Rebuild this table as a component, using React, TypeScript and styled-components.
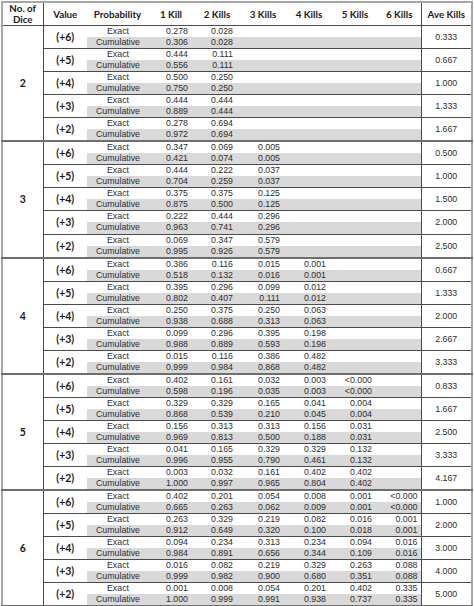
import styled, { createGlobalStyle } from "styled-components";

const GlobalStyle = createGlobalStyle`
    body {
        margin: 0;
        background: #ffffff;
    }
`

const Page = styled.div`
    padding: 1px 0 0 1px;
`

const StyledTable = styled.table`
    border-collapse: collapse;
    table-layout: fixed;
    width: 472px;
    border: 2px solid #a6a6a6;
    font-family: "Liberation Sans", Arial, sans-serif;
    font-size: 8.8px;
    color: #2e2e2e;
`

const HeadRow = styled.tr`
    height: 23px;
`

const HeadCell = styled.th<{ $line?: boolean }>`
    font-family: Lato, "Liberation Sans", sans-serif;
    font-weight: 700;
    font-size: 9.8px;
    line-height: 11px;
    color: #1a1a1a;
    text-align: center;
    vertical-align: middle;
    padding: 0;
    border-bottom: 1px solid #4a4a4a;
    border-right: ${(p) => (p.$line ? "1px solid #4a4a4a" : "none")};
`

const BodyRow = styled.tr`
    height: 11.54px;
`

const DiceCell = styled.td`
    font-family: Lato, "Liberation Sans", sans-serif;
    font-weight: 700;
    font-size: 10.5px;
    color: #1a1a1a;
    text-align: center;
    vertical-align: middle;
    padding: 0;
    border-right: 1px solid #4a4a4a;
    border-bottom: 2px solid #6e6e6e;
`

const ValueCell = styled.td<{ $end: boolean }>`
    font-family: Lato, "Liberation Sans", sans-serif;
    font-weight: 700;
    font-size: 10.5px;
    color: #1a1a1a;
    text-align: center;
    vertical-align: middle;
    padding: 0;
    border-bottom: ${(p) => (p.$end ? "2px solid #6e6e6e" : "1px solid #4a4a4a")};
`

const ProbCell = styled.td<{ $shade: boolean; $end: boolean }>`
    text-align: center;
    vertical-align: middle;
    padding: 0 0 0 1px;
    line-height: 11px;
    background: ${(p) => (p.$shade ? "#d9d9d9" : "transparent")};
    border-bottom: ${(p) =>
        !p.$shade ? "none" : p.$end ? "2px solid #6e6e6e" : "1px solid #4a4a4a"};
`

const NumCell = styled.td<{ $shade: boolean; $end: boolean; $pad: number }>`
    text-align: right;
    vertical-align: middle;
    padding: 0 ${(p) => p.$pad}px 0 0;
    line-height: 11px;
    white-space: nowrap;
    background: ${(p) => (p.$shade ? "#d9d9d9" : "transparent")};
    border-bottom: ${(p) =>
        !p.$shade ? "none" : p.$end ? "2px solid #6e6e6e" : "1px solid #4a4a4a"};
`

const AveCell = styled.td<{ $end: boolean }>`
    text-align: center;
    vertical-align: middle;
    padding: 0;
    border-left: 1px solid #4a4a4a;
    border-bottom: ${(p) => (p.$end ? "2px solid #6e6e6e" : "1px solid #4a4a4a")};
`

type Group = {
    value: string;
    exact: string[];
    cumulative: string[];
    ave: string;
};

type DiceBlock = {
    dice: string;
    groups: Group[];
};

const widths = [41, 44, 61, 46, 46, 46, 46, 46, 43, 51];
const pads = [6, 7, 6, 6, 6, 3];

const data: DiceBlock[] = [
    {
        dice: "2",
        groups: [
            { value: "(+6)", exact: ["0.278", "0.028"], cumulative: ["0.306", "0.028"], ave: "0.333" },
            { value: "(+5)", exact: ["0.444", "0.111"], cumulative: ["0.556", "0.111"], ave: "0.667" },
            { value: "(+4)", exact: ["0.500", "0.250"], cumulative: ["0.750", "0.250"], ave: "1.000" },
            { value: "(+3)", exact: ["0.444", "0.444"], cumulative: ["0.889", "0.444"], ave: "1.333" },
            { value: "(+2)", exact: ["0.278", "0.694"], cumulative: ["0.972", "0.694"], ave: "1.667" },
        ],
    },
    {
        dice: "3",
        groups: [
            { value: "(+6)", exact: ["0.347", "0.069", "0.005"], cumulative: ["0.421", "0.074", "0.005"], ave: "0.500" },
            { value: "(+5)", exact: ["0.444", "0.222", "0.037"], cumulative: ["0.704", "0.259", "0.037"], ave: "1.000" },
            { value: "(+4)", exact: ["0.375", "0.375", "0.125"], cumulative: ["0.875", "0.500", "0.125"], ave: "1.500" },
            { value: "(+3)", exact: ["0.222", "0.444", "0.296"], cumulative: ["0.963", "0.741", "0.296"], ave: "2.000" },
            { value: "(+2)", exact: ["0.069", "0.347", "0.579"], cumulative: ["0.995", "0.926", "0.579"], ave: "2.500" },
        ],
    },
    {
        dice: "4",
        groups: [
            { value: "(+6)", exact: ["0.386", "0.116", "0.015", "0.001"], cumulative: ["0.518", "0.132", "0.016", "0.001"], ave: "0.667" },
            { value: "(+5)", exact: ["0.395", "0.296", "0.099", "0.012"], cumulative: ["0.802", "0.407", "0.111", "0.012"], ave: "1.333" },
            { value: "(+4)", exact: ["0.250", "0.375", "0.250", "0.063"], cumulative: ["0.938", "0.688", "0.313", "0.063"], ave: "2.000" },
            { value: "(+3)", exact: ["0.099", "0.296", "0.395", "0.198"], cumulative: ["0.988", "0.889", "0.593", "0.198"], ave: "2.667" },
            { value: "(+2)", exact: ["0.015", "0.116", "0.386", "0.482"], cumulative: ["0.999", "0.984", "0.868", "0.482"], ave: "3.333" },
        ],
    },
    {
        dice: "5",
        groups: [
            { value: "(+6)", exact: ["0.402", "0.161", "0.032", "0.003", "<0.000"], cumulative: ["0.598", "0.196", "0.035", "0.003", "<0.000"], ave: "0.833" },
            { value: "(+5)", exact: ["0.329", "0.329", "0.165", "0.041", "0.004"], cumulative: ["0.868", "0.539", "0.210", "0.045", "0.004"], ave: "1.667" },
            { value: "(+4)", exact: ["0.156", "0.313", "0.313", "0.156", "0.031"], cumulative: ["0.969", "0.813", "0.500", "0.188", "0.031"], ave: "2.500" },
            { value: "(+3)", exact: ["0.041", "0.165", "0.329", "0.329", "0.132"], cumulative: ["0.996", "0.955", "0.790", "0.461", "0.132"], ave: "3.333" },
            { value: "(+2)", exact: ["0.003", "0.032", "0.161", "0.402", "0.402"], cumulative: ["1.000", "0.997", "0.965", "0.804", "0.402"], ave: "4.167" },
        ],
    },
    {
        dice: "6",
        groups: [
            { value: "(+6)", exact: ["0.402", "0.201", "0.054", "0.008", "0.001", "<0.000"], cumulative: ["0.665", "0.263", "0.062", "0.009", "0.001", "<0.000"], ave: "1.000" },
            { value: "(+5)", exact: ["0.263", "0.329", "0.219", "0.082", "0.016", "0.001"], cumulative: ["0.912", "0.649", "0.320", "0.100", "0.018", "0.001"], ave: "2.000" },
            { value: "(+4)", exact: ["0.094", "0.234", "0.313", "0.234", "0.094", "0.016"], cumulative: ["0.984", "0.891", "0.656", "0.344", "0.109", "0.016"], ave: "3.000" },
            { value: "(+3)", exact: ["0.016", "0.082", "0.219", "0.329", "0.263", "0.088"], cumulative: ["0.999", "0.982", "0.900", "0.680", "0.351", "0.088"], ave: "4.000" },
            { value: "(+2)", exact: ["0.001", "0.008", "0.054", "0.201", "0.402", "0.335"], cumulative: ["1.000", "0.999", "0.991", "0.938", "0.737", "0.335"], ave: "5.000" },
        ],
    },
];

function numCells(values: string[], shade: boolean, end: boolean) {
    return pads.map((pad, i) => (
        <NumCell key={i} $shade={shade} $end={end} $pad={pad}>
            {values[i] ?? ""}
        </NumCell>
    ));
}

export default function App() {
    return (
        <>
            <GlobalStyle />
            <Page>
                <StyledTable>
                    <colgroup>
                        {widths.map((w, i) => (
                            <col key={i} style={{ width: w }} />
                        ))}
                    </colgroup>
                    <thead>
                        <HeadRow>
                            <HeadCell $line>No. of<br />Dice</HeadCell>
                            <HeadCell>Value</HeadCell>
                            <HeadCell>Probability</HeadCell>
                            <HeadCell>1 Kill</HeadCell>
                            <HeadCell>2 Kills</HeadCell>
                            <HeadCell>3 Kills</HeadCell>
                            <HeadCell>4 Kills</HeadCell>
                            <HeadCell>5 Kills</HeadCell>
                            <HeadCell $line>6 Kills</HeadCell>
                            <HeadCell>Ave Kills</HeadCell>
                        </HeadRow>
                    </thead>
                    <tbody>
                        {data.map((block) =>
                            block.groups.map((g, gi) => {
                                const end = gi === block.groups.length - 1;
                                return [
                                    <BodyRow key={block.dice + g.value + "e"}>
                                        {gi === 0 && <DiceCell rowSpan={10}>{block.dice}</DiceCell>}
                                        <ValueCell rowSpan={2} $end={end}>{g.value}</ValueCell>
                                        <ProbCell $shade={false} $end={end}>Exact</ProbCell>
                                        {numCells(g.exact, false, end)}
                                        <AveCell rowSpan={2} $end={end}>{g.ave}</AveCell>
                                    </BodyRow>,
                                    <BodyRow key={block.dice + g.value + "c"}>
                                        <ProbCell $shade $end={end}>Cumulative</ProbCell>
                                        {numCells(g.cumulative, true, end)}
                                    </BodyRow>,
                                ];
                            })
                        )}
                    </tbody>
                </StyledTable>
            </Page>
        </>
    );
}
